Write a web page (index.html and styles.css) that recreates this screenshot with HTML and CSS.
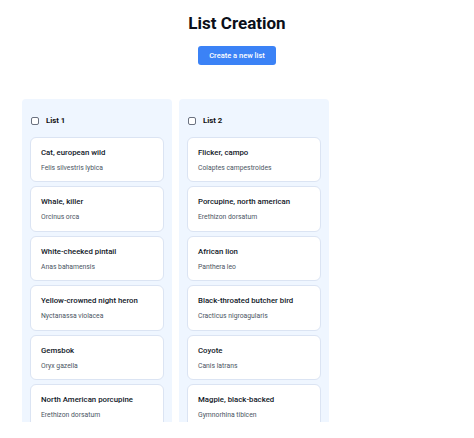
FILE: index.html
```html
<!DOCTYPE html>
<html>
<head>
<meta charset="utf-8">
<link rel="stylesheet" href="styles.css">
</head>
<body>
<div class="page">
  <h1 class="title">List Creation</h1>
  <div class="actions"><button class="btn">Create a new list</button></div>
  <div class="board">
    <div class="list">
      <div class="list-head"><span class="check"></span><span class="list-name">List 1</span></div>
      <div class="card"><div class="name">Cat, european wild</div><div class="sci">Felis silvestris lybica</div></div>
      <div class="card"><div class="name">Whale, killer</div><div class="sci">Orcinus orca</div></div>
      <div class="card"><div class="name">White-cheeked pintail</div><div class="sci">Anas bahamensis</div></div>
      <div class="card"><div class="name">Yellow-crowned night heron</div><div class="sci">Nyctanassa violacea</div></div>
      <div class="card"><div class="name">Gemsbok</div><div class="sci">Oryx gazella</div></div>
      <div class="card"><div class="name">North American porcupine</div><div class="sci">Erethizon dorsatum</div></div>
    </div>
    <div class="list">
      <div class="list-head"><span class="check"></span><span class="list-name">List 2</span></div>
      <div class="card"><div class="name">Flicker, campo</div><div class="sci">Colaptes campestroides</div></div>
      <div class="card"><div class="name">Porcupine, north american</div><div class="sci">Erethizon dorsatum</div></div>
      <div class="card"><div class="name">African lion</div><div class="sci">Panthera leo</div></div>
      <div class="card"><div class="name">Black-throated butcher bird</div><div class="sci">Cracticus nigroagularis</div></div>
      <div class="card"><div class="name">Coyote</div><div class="sci">Canis latrans</div></div>
      <div class="card"><div class="name">Magpie, black-backed</div><div class="sci">Gymnorhina tibicen</div></div>
    </div>
  </div>
</div>
</body>
</html>
```
FILE: styles.css
```css
* { box-sizing: border-box; }
html, body { margin: 0; padding: 0; background: #fff; }
body { font-family: Roboto, "Noto Sans", sans-serif; color: #111827; }
.page { padding-top: 12px; }
.title { margin: 0; text-align: center; font-size: 17px; font-weight: 700; line-height: 22px; color: #0b0f19; }
.actions { display: flex; justify-content: center; margin-top: 12px; }
.btn { border: 0; background: #3b82f6; color: #fff; font-family: inherit; font-size: 7.5px; font-weight: 500; height: 19px; width: 78px; border-radius: 3px; padding: 0; }
.board { display: flex; gap: 7px; margin: 34px 0 0 22px; height: 323px; overflow: hidden; align-items: flex-start; }
.list { width: 150px; background: #eff6ff; border-radius: 4px; padding: 8px 8px 0; display: flex; flex-direction: column; gap: 4px; }
.list-head { display: flex; align-items: center; gap: 7px; height: 26px; margin: 0 0 0 1px; padding-top: 1px; }
.check { width: 8px; height: 8px; border: 1px solid #6b7280; border-radius: 2px; background: #fff; }
.list-name { font-size: 7.8px; font-weight: 700; color: #111; }
.card { background: #fff; border: 1px solid #dbe4f3; border-radius: 6px; height: 45.4px; padding: 10px 10px 0; flex-shrink: 0; }
.name { font-size: 7.8px; font-weight: 500; color: #111827; line-height: 10px; }
.sci { font-size: 6.8px; color: #4b5563; margin-top: 6px; line-height: 9px; }
```
